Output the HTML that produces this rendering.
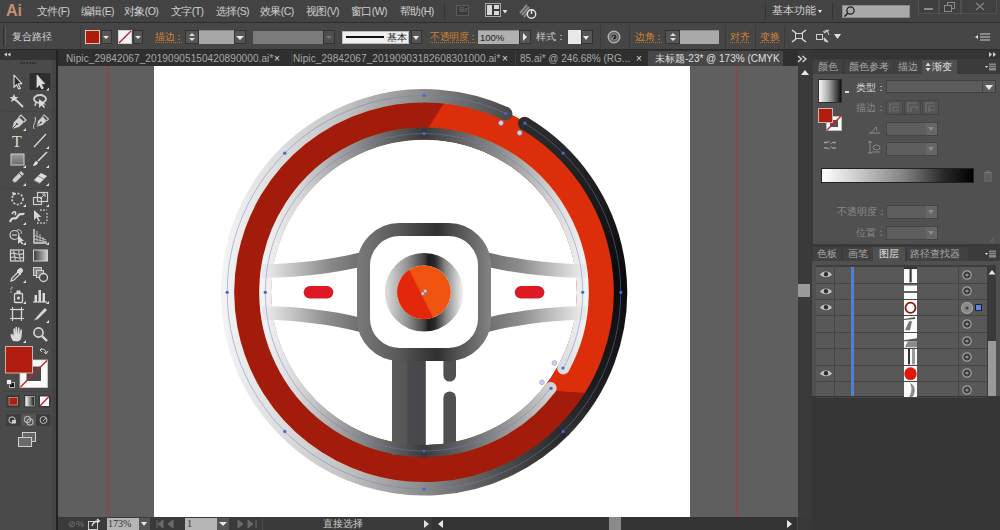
<!DOCTYPE html>
<html><head><meta charset="utf-8">
<style>
*{margin:0;padding:0;box-sizing:border-box}
html,body{width:1000px;height:530px;overflow:hidden;background:#363636;font-family:"Liberation Sans",sans-serif;}
.a{position:absolute}
.t{position:absolute;white-space:nowrap;line-height:1}
.mn{position:absolute;top:5px;font-size:10.5px;color:#cfcfcf;white-space:nowrap;line-height:12px;letter-spacing:-0.6px}
.cb{position:absolute;font-size:10px;white-space:nowrap;line-height:12px}
.or{color:#cf8232;text-decoration:underline;text-decoration-style:dotted;text-decoration-color:#b07030;text-underline-offset:2px;letter-spacing:-0.4px}
.dd{position:absolute;background:#5b5b5b;border:1px solid #333}
.tri{position:absolute;width:0;height:0;border-left:4px solid transparent;border-right:4px solid transparent;border-top:5px solid #e8e8e8}
.sp{position:absolute;background:#333;width:1px}
#menubar{left:0;top:0;width:1000px;height:22px;background:#434343}
#ctrlbar{left:0;top:23px;width:1000px;height:26px;background:#464646}
#sep1{left:0;top:22px;width:1000px;height:1px;background:#2c2c2c}
#sep2{left:0;top:49px;width:1000px;height:1px;background:#2a2a2a}
#toolbar{left:0;top:50px;width:56px;height:480px;background:#4a4a4a}
#tabbar{left:58px;top:50px;width:740px;height:16px;background:#2f2f2f}
#canvas{left:58px;top:66px;width:740px;height:451px;background:#5f5f5f;overflow:hidden}
#status{left:58px;top:517px;width:740px;height:13px;background:#3a3a3a}
#vscroll{left:798px;top:50px;width:14px;height:480px;background:#383838}
#panel{left:812px;top:50px;width:188px;height:346px;background:#535353}
.tab{position:absolute;top:53px;font-size:10px;color:#a9a9a9;white-space:nowrap;line-height:12px}
</style></head>
<body>
<!-- MENU BAR -->
<div class="a" id="menubar"></div>
<div class="t" style="left:6px;top:3px;font-size:16px;font-weight:bold;color:#c68e6c;letter-spacing:0px">Ai</div>
<div class="mn" style="left:37px">文件(F)</div>
<div class="mn" style="left:81px">编辑(E)</div>
<div class="mn" style="left:124px">对象(O)</div>
<div class="mn" style="left:171px">文字(T)</div>
<div class="mn" style="left:216px">选择(S)</div>
<div class="mn" style="left:260px">效果(C)</div>
<div class="mn" style="left:306px">视图(V)</div>
<div class="mn" style="left:351px">窗口(W)</div>
<div class="mn" style="left:400px">帮助(H)</div>
<div class="sp" style="left:444px;top:2px;height:18px;background:#353535"></div>
<div class="a" style="left:456px;top:5px;width:13px;height:11px;border:1px solid #5c5c5c;background:#3a3a3a"></div>
<div class="t" style="left:459px;top:6px;font-size:8px;color:#5e5e5e;font-weight:bold">Br</div>
<svg class="a" style="left:485px;top:3px" width="24" height="15" viewBox="0 0 24 15">
 <rect x="0.5" y="0.5" width="15" height="13" fill="#3a3a3a" stroke="#aaa"/>
 <rect x="2" y="2" width="5" height="10" fill="#d8d8d8"/><rect x="9" y="2" width="5" height="4" fill="#d8d8d8"/><rect x="9" y="8" width="5" height="4" fill="#d8d8d8"/>
 <path d="M17.5,7 L22.5,7 L20,10.5 Z" fill="#ddd"/>
</svg>
<svg class="a" style="left:519px;top:4px" width="20" height="16" viewBox="0 0 20 16">
 <path d="M1,9 L8,1 M3,11 L10,3 M5,13 L9,8" stroke="#8a8a8a" stroke-width="2"/>
 <circle cx="12.5" cy="10" r="4.2" fill="none" stroke="#e0e0e0" stroke-width="1.4"/>
 <path d="M12.5,5 L12.5,10" stroke="#e0e0e0" stroke-width="1.4"/>
</svg>
<div class="sp" style="left:765px;top:2px;height:18px;background:#353535"></div>
<div class="t" style="left:772px;top:5px;font-size:11px;color:#cfcfcf">基本功能</div>
<div class="tri" style="left:818px;top:10px;border-left-width:2.5px;border-right-width:2.5px;border-top-width:3px"></div>
<div class="sp" style="left:832px;top:2px;height:18px;background:#353535"></div>
<div class="a" style="left:842px;top:5px;width:68px;height:13px;background:#a9a9a9;border:1px solid #8a8a8a"></div>
<svg class="a" style="left:843px;top:5px" width="14" height="13" viewBox="0 0 14 13"><circle cx="7.5" cy="5.5" r="3.6" fill="none" stroke="#222" stroke-width="1.3"/><path d="M5,8 L1.5,11.5" stroke="#222" stroke-width="1.6"/></svg>
<div class="a" style="left:918px;top:-1px;width:21px;height:15px;border:1px solid #505050;background:#404040"></div>
<div class="a" style="left:924px;top:8px;width:9px;height:2px;background:#8a8a8a"></div>
<div class="a" style="left:939px;top:-1px;width:22px;height:15px;border:1px solid #505050;background:#404040"></div>
<svg class="a" style="left:944px;top:2px" width="12" height="10" viewBox="0 0 12 10"><rect x="3.5" y="0.5" width="7" height="6" fill="none" stroke="#8a8a8a"/><rect x="0.5" y="3.5" width="7" height="6" fill="#3e3e3e" stroke="#8a8a8a"/></svg>
<div class="a" style="left:961px;top:-1px;width:36px;height:15px;border:1px solid #505050;background:#404040"></div>
<svg class="a" style="left:975px;top:2px" width="10" height="9" viewBox="0 0 10 9"><path d="M1,1 L9,8 M9,1 L1,8" stroke="#858585" stroke-width="1.1"/></svg>

<div class="a" id="sep1"></div>
<!-- CONTROL BAR -->
<div class="a" id="ctrlbar"></div>
<div class="a" style="left:3px;top:27px;width:3px;height:19px;border-left:1px solid #2e2e2e;border-right:1px solid #555"></div>
<div class="cb" style="left:12px;top:31px;color:#d6d6d6;font-family:'Liberation Serif',serif">复合路径</div>
<div class="sp" style="left:80px;top:25px;height:23px;background:#3a3a3a"></div>
<!-- fill swatch -->
<div class="a" style="left:85px;top:30px;width:15px;height:14px;background:#b01c0c;border:1px solid #e0c0b0"></div>
<div class="dd" style="left:101px;top:30px;width:11px;height:14px;background:#555"></div>
<div class="tri" style="left:103px;top:36px;border-left-width:3px;border-right-width:3px;border-top-width:3px"></div>
<!-- stroke swatch -->
<div class="a" style="left:118px;top:30px;width:14px;height:14px;background:#f4f4f4;border:1px solid #ccc"></div>
<svg class="a" style="left:118px;top:30px" width="14" height="14"><path d="M1,13 L13,1" stroke="#c0182a" stroke-width="1.3"/></svg>
<div class="dd" style="left:133px;top:30px;width:10px;height:14px;background:#555"></div>
<div class="tri" style="left:135px;top:36px;border-left-width:3px;border-right-width:3px;border-top-width:3px"></div>
<div class="cb or" style="left:155px;top:31px">描边：</div>
<!-- stroke weight -->
<div class="dd" style="left:185px;top:30px;width:14px;height:14px;background:#555"></div>
<svg class="a" style="left:186px;top:31px" width="12" height="12"><path d="M3,5 L6,2 L9,5 Z M3,7 L6,10 L9,7 Z" fill="#ddd"/></svg>
<div class="a" style="left:199px;top:30px;width:35px;height:14px;background:#a6a6a6;border-top:1px solid #888"></div>
<div class="dd" style="left:234px;top:30px;width:12px;height:14px;background:#555"></div>
<div class="tri" style="left:236px;top:36px;border-left-width:4px;border-right-width:4px;border-top-width:4px"></div>
<div class="a" style="left:253px;top:31px;width:70px;height:13px;background:#7a7a7a"></div>
<div class="dd" style="left:323px;top:30px;width:12px;height:14px;background:#4e4e4e"></div>
<div class="tri" style="left:326px;top:36px;border-left-width:3px;border-right-width:3px;border-top-width:3px;border-top-color:#777"></div>
<!-- brush -->
<div class="a" style="left:342px;top:31px;width:67px;height:13px;background:#efefef;border:1px solid #bbb"></div>
<div class="a" style="left:346px;top:36px;width:38px;height:2px;background:#111"></div>
<div class="cb" style="left:387px;top:32px;color:#222;font-size:10px;font-family:'Liberation Serif',serif">基本</div>
<div class="dd" style="left:411px;top:30px;width:11px;height:14px;background:#555"></div>
<div class="tri" style="left:413px;top:36px;border-left-width:3.5px;border-right-width:3.5px;border-top-width:4px"></div>
<div class="cb or" style="left:430px;top:31px;font-family:'Liberation Serif',serif">不透明度：</div>
<div class="a" style="left:478px;top:30px;width:41px;height:14px;background:#b0b0b0;border-top:1px solid #888"></div>
<div class="cb" style="left:480px;top:32px;color:#222;font-size:9.5px">100%</div>
<div class="dd" style="left:519px;top:30px;width:12px;height:14px;background:#555"></div>
<svg class="a" style="left:522px;top:33px" width="6" height="8"><path d="M1,0 L5,4 L1,8 Z" fill="#e8e8e8"/></svg>
<div class="cb" style="left:536px;top:31px;color:#d0d0d0;font-family:'Liberation Serif',serif">样式：</div>
<div class="a" style="left:568px;top:30px;width:13px;height:14px;background:#e8e8e8"></div>
<div class="dd" style="left:581px;top:30px;width:12px;height:14px;background:#555"></div>
<div class="tri" style="left:583px;top:36px;border-left-width:3.5px;border-right-width:3.5px;border-top-width:4px"></div>
<div class="sp" style="left:600px;top:25px;height:23px;background:#3a3a3a"></div>
<svg class="a" style="left:607px;top:30px" width="14" height="14"><circle cx="7" cy="7" r="5.8" fill="#666" stroke="#b8b8b8" stroke-width="1.3"/><circle cx="7" cy="7" r="3" fill="#2e2e2e" stroke="#999" stroke-width="0.8"/><path d="M5,9 L7,6" stroke="#ccc" stroke-width="0.8"/></svg>
<div class="sp" style="left:629px;top:25px;height:23px;background:#3a3a3a"></div>
<div class="cb or" style="left:635px;top:31px;font-family:'Liberation Serif',serif">边角：</div>
<div class="dd" style="left:665px;top:30px;width:15px;height:14px;background:#555"></div>
<svg class="a" style="left:667px;top:31px" width="12" height="12"><path d="M3,5 L6,2 L9,5 Z M3,7 L6,10 L9,7 Z" fill="#ddd"/></svg>
<div class="a" style="left:680px;top:30px;width:39px;height:14px;background:#a9a9a9;border-top:1px solid #888"></div>
<div class="sp" style="left:725px;top:25px;height:23px;background:#3a3a3a"></div>
<div class="cb or" style="left:730px;top:31px;font-family:'Liberation Serif',serif">对齐</div>
<div class="sp" style="left:755px;top:25px;height:23px;background:#3a3a3a"></div>
<div class="cb or" style="left:760px;top:31px;font-family:'Liberation Serif',serif">变换</div>
<div class="sp" style="left:784px;top:25px;height:23px;background:#3a3a3a"></div>
<svg class="a" style="left:791px;top:29px" width="16" height="14" viewBox="0 0 16 14"><path d="M1,1 L5,4 M15,1 L11,4 M1,13 L5,10 M15,13 L11,10" stroke="#d8d8d8" stroke-width="1.5"/><rect x="4.5" y="4.5" width="7" height="5" fill="none" stroke="#d8d8d8"/></svg>
<svg class="a" style="left:815px;top:29px" width="16" height="14" viewBox="0 0 16 14"><rect x="1.5" y="5.5" width="6" height="5" fill="none" stroke="#ccc"/><path d="M9,4 L14,1 M9,9 L13,13 L10,12 Z" stroke="#ccc" stroke-width="1.3" fill="#ccc"/><path d="M8,3 L12,1 L14,6" stroke="#ccc" fill="none"/></svg>
<svg class="a" style="left:834px;top:34px" width="7" height="5"><path d="M0,0 L7,0 L3.5,5 Z" fill="#ddd"/></svg>
<svg class="a" style="left:975px;top:33px" width="15" height="8" viewBox="0 0 15 8"><path d="M0,4 L3,2 L3,6 Z" fill="#ddd"/><path d="M5,1 L15,1 M5,4 L15,4 M5,7 L15,7" stroke="#ccc" stroke-width="1.2"/></svg>

<div class="a" id="sep2"></div>
<div class="a" id="toolbar"></div><svg class="a" style="left:0;top:50px" width="58" height="480" viewBox="0 50 58 480">
<rect x="0" y="50" width="56" height="10" fill="#343434"/>
<path d="M4,54.5 L7,52.5 L7,56.5 Z M7.5,54.5 L10.5,52.5 L10.5,56.5 Z" fill="#cfcfcf"/>
<rect x="52" y="60" width="4" height="470" fill="#444"/><rect x="56" y="50" width="2.5" height="480" fill="#222"/>
<path d="M20,63 L36,63" stroke="#333" stroke-width="2" stroke-dasharray="2 1"/>
<path d="M3,111.5 L54,111.5 M3,188.5 L54,188.5 M3,391.5 L54,391.5 M3,411.5 L54,411.5" stroke="#444" stroke-width="1"/>
<g transform="translate(9,73.5)"><path d="M5,1.5 L5,14 L7.5,11.2 L9.8,15.5 L11.4,14.7 L9.2,10.4 L12.8,10.2 Z" fill="#2a2a2a" stroke="#e0e0e0" stroke-width="1.1" stroke-linejoin="round"/></g>
<rect x="29.5" y="73" width="21" height="17" fill="#2e2e2e"/>
<g transform="translate(32,73.5)"><path d="M5,1.5 L5,14 L7.5,11.2 L9.8,15.5 L11.4,14.7 L9.2,10.4 L12.8,10.2 Z" fill="#dcdcdc" stroke="#dcdcdc" stroke-width="0.8" stroke-linejoin="round"/><path d="M17,14 L17,17 L14,17 Z" fill="#e0e0e0"/></g>
<g transform="translate(9,93)"><path d="M7,7 L14,14" stroke="#d0d0d0" stroke-width="2"/><path d="M5,1 L6.3,4 L9.5,4 L7,6 L8,9 L5,7.2 L2,9 L3,6 L0.5,4 L3.7,4 Z" fill="#d8d8d8"/></g>
<g transform="translate(32,93)"><ellipse cx="8" cy="6" rx="6" ry="4" fill="none" stroke="#d0d0d0" stroke-width="1.8"/><path d="M7,6 L7,15 L9.5,12.5 L12,15 L13,14 L11,11.5 L14,11.5 Z" fill="#d8d8d8"/><path d="M4,9 L3,13" stroke="#d0d0d0" stroke-width="1.5"/></g>
<g transform="translate(9,114)"><path d="M3,15 L5,8 L10,3 L15,8 L10,13 Z" fill="#d0d0d0"/><path d="M3,15 L8,10" stroke="#4a4a4a" stroke-width="1"/><circle cx="8" cy="10" r="1.1" fill="#4a4a4a"/><path d="M10,3 L12,1 L17,6 L15,8" fill="none" stroke="#d0d0d0" stroke-width="1.2"/><path d="M17,14 L17,17 L14,17 Z" fill="#e0e0e0"/></g>
<g transform="translate(32,114)"><g transform="translate(2,0) scale(0.85)"><path d="M3,15 L5,8 L10,3 L15,8 L10,13 Z" fill="#d0d0d0"/><path d="M3,15 L8,10" stroke="#4a4a4a" stroke-width="1"/><circle cx="8" cy="10" r="1.1" fill="#4a4a4a"/><path d="M10,3 L12,1 L17,6 L15,8" fill="none" stroke="#d0d0d0" stroke-width="1.2"/></g><path d="M2,15 C0,10 5,9 3,3" fill="none" stroke="#d0d0d0" stroke-width="1"/></g>
<g transform="translate(9,132)"><text x="8" y="14.5" font-family="Liberation Serif" font-size="16" fill="#dadada" text-anchor="middle">T</text></g>
<g transform="translate(32,132)"><path d="M2,15 L14,2" stroke="#d8d8d8" stroke-width="1.3"/><path d="M17,14 L17,17 L14,17 Z" fill="#e0e0e0"/></g>
<g transform="translate(9,151)"><defs><linearGradient id="tg1" x1="0" y1="0" x2="0" y2="1"><stop offset="0" stop-color="#9a9a9a"/><stop offset="1" stop-color="#6a6a6a"/></linearGradient></defs><rect x="2" y="3" width="13" height="11" fill="url(#tg1)" stroke="#cfcfcf" stroke-width="1"/><path d="M17,14 L17,17 L14,17 Z" fill="#e0e0e0"/></g>
<g transform="translate(32,151)"><path d="M6,10 L15,1" stroke="#d8d8d8" stroke-width="1.6"/><path d="M1,15 C3,15 5,14 6,12 L5,10 C3,10 2,12 1,15 Z" fill="#e0e0e0"/><path d="M17,14 L17,17 L14,17 Z" fill="#e0e0e0"/></g>
<g transform="translate(9,169)"><path d="M3,14 L4,10 L12,2 L15,5 L7,13 Z" fill="#cfcfcf"/><path d="M3,14 L4.5,12.5" stroke="#333" stroke-width="1.2"/><path d="M10,4 L13,7" stroke="#555"/><path d="M17,14 L17,17 L14,17 Z" fill="#e0e0e0"/></g>
<g transform="translate(32,169)"><path d="M2,11 L9,4 L15,7 L8,14 Z" fill="#e0e0e0"/><path d="M2,11 L8,14 L8,15 L2,12 Z" fill="#999"/><path d="M6,7 L12,10" stroke="#888"/><path d="M17,14 L17,17 L14,17 Z" fill="#e0e0e0"/></g>
<g transform="translate(9,190)"><circle cx="8.5" cy="9" r="5.5" fill="none" stroke="#d0d0d0" stroke-width="1.6" stroke-dasharray="2 1.6"/><path d="M3,2 L7,3 L4,6 Z" fill="#d8d8d8"/><path d="M17,14 L17,17 L14,17 Z" fill="#e0e0e0"/></g>
<g transform="translate(32,190)"><rect x="1.5" y="7.5" width="8" height="7" fill="none" stroke="#d0d0d0" stroke-width="1.2"/><rect x="5.5" y="2.5" width="10" height="9" fill="none" stroke="#d0d0d0" stroke-width="1.2"/><path d="M8,9 L13,4 M10,4 L13,4 L13,7" stroke="#d0d0d0" fill="none"/><path d="M17,14 L17,17 L14,17 Z" fill="#e0e0e0"/></g>
<g transform="translate(9,208)"><path d="M1,14 C4,6 6,14 9,8 C11,4 14,8 15,5" fill="none" stroke="#d8d8d8" stroke-width="2.2"/><path d="M3,6 C5,2 8,4 6,7" fill="none" stroke="#d8d8d8" stroke-width="1.6"/><path d="M17,14 L17,17 L14,17 Z" fill="#e0e0e0"/></g>
<g transform="translate(32,208)"><path d="M2,2 L2,12 L4.5,9.5 L6.5,13.5 L8,12.8 L6,9 L9.5,9 Z" fill="#d8d8d8"/><path d="M8,2 L15,2 M15,5 L15,14 M5,15 L15,15" stroke="#d0d0d0" stroke-width="1.4" stroke-dasharray="1.6 1.6"/></g>
<g transform="translate(9,228)"><circle cx="5.5" cy="7" r="4.5" fill="none" stroke="#cfcfcf" stroke-width="1.2"/><path d="M3,7 L8,7" stroke="#cfcfcf" stroke-width="1.2"/><path d="M8,2 C12,1 13,4 12,6" fill="none" stroke="#cfcfcf"/><path d="M9,7 L9,16 L11,14 L13,16.5 L14.3,15.5 L12.3,13 L15,13 Z" fill="#d8d8d8"/><path d="M17,14 L17,17 L14,17 Z" fill="#e0e0e0"/></g>
<g transform="translate(32,228)"><path d="M2,1 L2,15 L15,15" stroke="#d8d8d8" stroke-width="1.4" fill="none"/><path d="M5,3 L5,15 M8,6 L8,15 M11,9 L11,15 M2,7 L14,12 M2,11 L15,14" stroke="#bbb" stroke-width="1"/><path d="M17,14 L17,17 L14,17 Z" fill="#e0e0e0"/></g>
<g transform="translate(9,247.5)"><rect x="1.5" y="2.5" width="13" height="11" fill="none" stroke="#d8d8d8" stroke-width="1.2"/><path d="M2,6 C6,4 9,9 14,6 M2,10 C6,8 9,12 14,10 M5,3 C4,7 7,9 6,13 M10,3 C9,7 12,9 11,13" stroke="#cfcfcf" fill="none" stroke-width="1.1"/></g>
<g transform="translate(32,247.5)"><defs><linearGradient id="tg2" x1="0" y1="0" x2="1" y2="0"><stop offset="0" stop-color="#3a3a3a"/><stop offset="1" stop-color="#cfcfcf"/></linearGradient></defs><rect x="1.5" y="2.5" width="14" height="11" fill="url(#tg2)" stroke="#d0d0d0" stroke-width="1"/></g>
<g transform="translate(9,266)"><path d="M2,15 L3,12 L9,6 L11,8 L5,14 Z" fill="none" stroke="#d8d8d8" stroke-width="1.3"/><path d="M8,5 L12,9 M10,3 C12,1 15,4 13,6 L11,8 L8,5 Z" fill="#d8d8d8" stroke="#d8d8d8"/><path d="M17,14 L17,17 L14,17 Z" fill="#e0e0e0"/></g>
<g transform="translate(32,266)"><rect x="1.5" y="1.5" width="8" height="8" fill="#888" stroke="#cfcfcf"/><rect x="4.5" y="4.5" width="7" height="7" fill="#777" stroke="#cfcfcf"/><circle cx="11.5" cy="11.5" r="4" fill="#4a4a4a" stroke="#d8d8d8" stroke-width="1.3"/></g>
<g transform="translate(9,287)"><rect x="5.5" y="6.5" width="8" height="9" rx="1" fill="none" stroke="#d8d8d8" stroke-width="1.3"/><rect x="7.5" y="3.5" width="4" height="3" fill="#d8d8d8"/><circle cx="9.5" cy="11" r="1.6" fill="#d8d8d8"/><path d="M1,2 L3,2 M1,5 L3,5 M2,0 L4,1" stroke="#aaa"/><path d="M17,14 L17,17 L14,17 Z" fill="#e0e0e0"/></g>
<g transform="translate(32,287)"><path d="M1,15 L15,15" stroke="#d8d8d8" stroke-width="1.2"/><rect x="2.5" y="8" width="2.5" height="7" fill="#d8d8d8"/><rect x="6.5" y="3" width="2.5" height="12" fill="#d8d8d8"/><rect x="10.5" y="6" width="2.5" height="9" fill="#d8d8d8"/><path d="M17,14 L17,17 L14,17 Z" fill="#e0e0e0"/></g>
<g transform="translate(9,306)"><rect x="3.5" y="3.5" width="9" height="9" fill="none" stroke="#d8d8d8" stroke-width="1.3"/><path d="M1,3.5 L15,3.5 M1,12.5 L15,12.5 M3.5,1 L3.5,15 M12.5,1 L12.5,15" stroke="#d8d8d8" stroke-width="1"/></g>
<g transform="translate(32,306)"><path d="M2,14 L10,5 L13,2 L15,4 L6,13 Z" fill="#d8d8d8"/><path d="M2,14 L6,13" stroke="#999"/><path d="M17,14 L17,17 L14,17 Z" fill="#e0e0e0"/></g>
<g transform="translate(9,326)"><path d="M4,15 C2,12 1,9 2,8 C3,7 4,9 4.5,10 L4.5,3 C4.5,2 6,2 6,3 L6,8 L6.5,1.5 C6.5,0.5 8,0.5 8,1.5 L8.3,8 L9,2 C9,1 10.5,1 10.5,2 L10.5,8.5 L11.5,4 C11.8,3 13,3.2 13,4.2 L12.5,11 C12,14 10,15.5 8,15.5 Z" fill="#dadada"/><path d="M17,14 L17,17 L14,17 Z" fill="#e0e0e0"/></g>
<g transform="translate(32,326)"><circle cx="6.5" cy="6.5" r="4.6" fill="#555" stroke="#d8d8d8" stroke-width="1.6"/><path d="M10,10 L15,15" stroke="#d8d8d8" stroke-width="2.4"/></g>
<rect x="20" y="360" width="27.5" height="27.5" fill="#fafafa" stroke="#cfcfcf" stroke-width="0.8"/>
<rect x="26.5" y="366.5" width="14.5" height="14.5" fill="#4a4a4a"/>
<path d="M20.5,387 L47,360.5" stroke="#c0202a" stroke-width="1.5"/>
<rect x="5.5" y="346.5" width="27" height="26.5" fill="#b01d0e" stroke="#d8b0a0" stroke-width="1"/>
<path d="M40,350 C43,348 46,350 46,353 M44,352 L46,354 L48,351 M40,350 L42,348 M40,350 L42,352" stroke="#d0d0d0" fill="none" stroke-width="1"/>
<rect x="9.5" y="382.5" width="5" height="5" fill="#111" stroke="#ddd" stroke-width="0.8"/><rect x="6.5" y="379.5" width="5" height="5" fill="#f0f0f0" stroke="#333" stroke-width="0.6"/>
<rect x="6.5" y="395" width="13.5" height="12.5" fill="#3a3a3a"/><rect x="9" y="397.5" width="8.5" height="7.5" fill="#b01d0e" stroke="#d0c0b0" stroke-width="0.6"/>
<defs><linearGradient id="tg3" x1="0" y1="0" x2="1" y2="0"><stop offset="0" stop-color="#fff"/><stop offset="1" stop-color="#111"/></linearGradient></defs>
<rect x="24" y="395" width="12" height="12.5" fill="#3a3a3a"/><rect x="25.5" y="396.5" width="9" height="9.5" fill="url(#tg3)" stroke="#ccc" stroke-width="0.6"/>
<rect x="38.5" y="395" width="12" height="12.5" fill="#3a3a3a"/><rect x="40" y="396.5" width="9" height="9.5" fill="#fff"/><path d="M40,406 L49,396.5" stroke="#c0202a" stroke-width="1.4"/>
<rect x="6.5" y="414" width="44" height="12" fill="#3c3c3c"/><rect x="21" y="414" width="15" height="12" fill="#555"/>
<circle cx="12" cy="420" r="3.2" fill="none" stroke="#ccc"/><rect x="12" y="420" width="4" height="3.5" fill="#ccc"/>
<circle cx="27.5" cy="419.5" r="3.2" fill="none" stroke="#ccc"/><circle cx="30" cy="422" r="3.2" fill="none" stroke="#ccc"/>
<circle cx="43.5" cy="420" r="3.5" fill="none" stroke="#bbb"/><path d="M43,421 L46,418" stroke="#bbb"/>
<rect x="22.5" y="432.5" width="13" height="9" fill="#666" stroke="#cfcfcf"/><rect x="18.5" y="437.5" width="13" height="9" fill="#6a6a6a" stroke="#cfcfcf"/>
</svg>
<div class="a" id="tabbar"></div>
<div class="tab" style="left:66px;letter-spacing:0.1px">Nipic_29842067_20190905150420890000.ai*</div>
<div class="tab" style="left:274px;color:#ddd">×</div>
<div class="sp" style="left:291px;top:51px;height:15px;background:#404040"></div>
<div class="tab" style="left:293px;letter-spacing:0.1px">Nipic_29842067_20190903182608301000.ai*</div>
<div class="tab" style="left:502px;color:#ddd">×</div>
<div class="sp" style="left:515px;top:51px;height:15px;background:#404040"></div>
<div class="tab" style="left:520px">85.ai* @ 246.68% (RG...</div>
<div class="tab" style="left:636px;color:#ddd">×</div>
<div class="a" style="left:648px;top:51px;width:135px;height:15px;background:#474747"></div>
<div class="tab" style="left:655px;color:#e0e0e0">未标题-23* @ 173% (CMYK</div>
<div class="a" id="canvas">
  <div class="a" style="left:96px;top:0;width:536px;height:451px;background:#fff"></div>
  <div class="a" style="left:47px;top:0;width:6px;height:451px;background:linear-gradient(90deg,#5f5f5f,#705656 30%,#7a5050 50%,#705656 70%,#5f5f5f)"></div>
  <div class="a" style="left:676px;top:0;width:6px;height:451px;background:linear-gradient(90deg,#5f5f5f,#705656 30%,#7c4e4e 50%,#705656 70%,#5f5f5f)"></div>
</div>
<svg class="a" style="left:0;top:0" width="1000" height="530" viewBox="0 0 1000 530">
<defs>
<linearGradient id="gOuter" gradientUnits="userSpaceOnUse" x1="222" y1="0" x2="626" y2="0">
 <stop offset="0" stop-color="#f4f4f4"/><stop offset="0.3" stop-color="#c4c4c4"/><stop offset="0.5" stop-color="#8a8a8a"/><stop offset="0.7" stop-color="#4c4c4c"/><stop offset="0.85" stop-color="#262626"/><stop offset="1" stop-color="#0a0a0a"/>
</linearGradient>
<linearGradient id="gOuterB" gradientUnits="userSpaceOnUse" x1="0" y1="115" x2="0" y2="438">
 <stop offset="0" stop-color="#2e2e2e"/><stop offset="0.5" stop-color="#0a0a0a"/><stop offset="0.85" stop-color="#1e1e1e"/><stop offset="1" stop-color="#333"/>
</linearGradient>
<linearGradient id="gInner" gradientUnits="userSpaceOnUse" x1="259" y1="0" x2="589" y2="0">
 <stop offset="0" stop-color="#f6f6f6"/><stop offset="0.12" stop-color="#d8d8d8"/><stop offset="0.25" stop-color="#a0a0a0"/><stop offset="0.5" stop-color="#3a3a3a"/><stop offset="0.75" stop-color="#959595"/><stop offset="0.9" stop-color="#d8d8d8"/><stop offset="1" stop-color="#f6f6f6"/>
</linearGradient>
<linearGradient id="gHub" gradientUnits="userSpaceOnUse" x1="357" y1="0" x2="491" y2="0">
 <stop offset="0" stop-color="#7a7a7a"/><stop offset="0.3" stop-color="#5a5a5a"/><stop offset="0.5" stop-color="#3c3c3c"/><stop offset="0.6" stop-color="#303030"/><stop offset="0.72" stop-color="#4c4c4c"/><stop offset="1" stop-color="#838383"/>
</linearGradient>
<linearGradient id="gSpL" gradientUnits="userSpaceOnUse" x1="268" y1="0" x2="360" y2="0">
 <stop offset="0" stop-color="#e8e8e8"/><stop offset="0.35" stop-color="#b8b8b8"/><stop offset="0.65" stop-color="#8c8c8c"/><stop offset="1" stop-color="#6e6e6e"/>
</linearGradient>
<linearGradient id="gSpR" gradientUnits="userSpaceOnUse" x1="580" y1="0" x2="488" y2="0">
 <stop offset="0" stop-color="#e8e8e8"/><stop offset="0.35" stop-color="#b8b8b8"/><stop offset="0.65" stop-color="#8c8c8c"/><stop offset="1" stop-color="#6e6e6e"/>
</linearGradient>
<linearGradient id="gDisc" gradientUnits="userSpaceOnUse" x1="385" y1="0" x2="463" y2="0">
 <stop offset="0" stop-color="#e0e0e0"/><stop offset="0.3" stop-color="#8e8e8e"/><stop offset="0.5" stop-color="#444"/><stop offset="0.56" stop-color="#1c1c1c"/><stop offset="0.64" stop-color="#2a2a2a"/><stop offset="0.78" stop-color="#8a8a8a"/><stop offset="1" stop-color="#f2f2f2"/>
</linearGradient>
<linearGradient id="gCol" gradientUnits="userSpaceOnUse" x1="392" y1="0" x2="426" y2="0">
 <stop offset="0" stop-color="#5c5c5c"/><stop offset="0.45" stop-color="#555"/><stop offset="0.46" stop-color="#47494c"/><stop offset="1" stop-color="#45474a"/>
</linearGradient>
<clipPath id="cpAnn"><path clip-rule="evenodd" d="M424.00,292.30 m-198,0 a198,198 0 1 0 396,0 a198,198 0 1 0 -396,0 Z M424.00,292.30 m-153,0 a153,153 0 1 0 306,0 a153,153 0 1 0 -306,0 Z"/></clipPath>
<clipPath id="cpDisc"><circle cx="424" cy="292.3" r="26.8"/></clipPath>
</defs>
<g clip-path="url(#cpAnn)"><rect x="200" y="80" width="450" height="430" fill="#a31b0a"/>
<path d="M462,75 L700,75 L700,394.5 L586,393 L530,389 L416,147 Z" fill="#dc2e0a"/></g>
<rect x="392" y="350" width="33.8" height="105" fill="url(#gCol)"/>
<path d="M443.4,350 L456,350 L456,375.2 A6.3,6.3 0 0 1 443.4,375.2 Z" fill="#505050"/>
<path d="M443.4,397.7 A6.3,6.3 0 0 1 456,397.7 L456,452 L443.4,452 Z" fill="#505050"/>
<path d="M550.58,388.03 A158.7,158.7 0 1 1 563.34,368.27" fill="none" stroke="url(#gInner)" stroke-width="12.2" stroke-linecap="round"/>
<path d="M565.35,428.80 A196.5,196.5 0 1 1 505.80,113.64" fill="none" stroke="url(#gOuter)" stroke-width="13.4"/>
<circle cx="505.80" cy="113.64" r="6.7" fill="url(#gOuter)"/>
<path d="M524.62,123.51 A196.5,196.5 0 0 1 562.95,431.25" fill="none" stroke="url(#gOuterB)" stroke-width="13.4"/>
<circle cx="524.62" cy="123.51" r="6.7" fill="url(#gOuterB)"/>
<path d="M262,264.5 Q318,263 360,252.5 L360,267 Q318,277 262,278 Z" fill="url(#gSpL)"/>
<path d="M262,306 Q318,307 360,317.5 L360,332 Q318,321 262,319.5 Z" fill="url(#gSpL)"/>
<path d="M586,264.5 Q530,263 488,252.5 L488,267 Q530,277 586,278 Z" fill="url(#gSpR)"/>
<path d="M586,306 Q530,307 488,317.5 L488,332 Q530,321 586,319.5 Z" fill="url(#gSpR)"/>
<rect x="363.5" y="229.5" width="121" height="125" rx="36" ry="36" fill="none" stroke="url(#gHub)" stroke-width="13"/>
<circle cx="424" cy="292.3" r="33" fill="none" stroke="url(#gDisc)" stroke-width="12.4"/>
<g clip-path="url(#cpDisc)"><rect x="390" y="260" width="70" height="70" fill="#f0530f"/><path d="M409.4,270.2 L433.5,318.3 L440,340 L380,340 L380,250 L400,250 Z" fill="#e3270b"/></g>
<rect x="303.7" y="286.1" width="29.6" height="12.4" rx="6.2" fill="#de1825"/>
<rect x="514.8" y="286.1" width="29.6" height="12.4" rx="6.2" fill="#de1825"/>
<path d="M524.77,123.26 A196.8,196.8 0 1 1 505.92,113.36" fill="none" stroke="#6580cc" stroke-width="0.6" opacity="0.8"/>
<path d="M550.58,388.03 A158.7,158.7 0 1 1 563.34,368.27" fill="none" stroke="#6580cc" stroke-width="0.6" opacity="0.8"/>
<circle cx="620.80" cy="292.30" r="1.6" fill="#4d62d6"/>
<circle cx="563.16" cy="431.46" r="1.6" fill="#4d62d6"/>
<circle cx="424.00" cy="489.10" r="1.6" fill="#4d62d6"/>
<circle cx="284.84" cy="431.46" r="1.6" fill="#4d62d6"/>
<circle cx="227.20" cy="292.30" r="1.6" fill="#4d62d6"/>
<circle cx="284.84" cy="153.14" r="1.6" fill="#4d62d6"/>
<circle cx="424.00" cy="95.50" r="1.6" fill="#4d62d6"/>
<circle cx="563.16" cy="153.14" r="1.6" fill="#4d62d6"/>
<circle cx="582.70" cy="292.30" r="1.6" fill="#4d62d6"/>
<circle cx="424.00" cy="451.00" r="1.6" fill="#4d62d6"/>
<circle cx="265.30" cy="292.30" r="1.6" fill="#4d62d6"/>
<circle cx="424.00" cy="133.60" r="1.6" fill="#4d62d6"/>
<circle cx="505.80" cy="113.50" r="1.6" fill="#4d62d6"/>
<circle cx="524.90" cy="123.10" r="1.6" fill="#4d62d6"/>
<circle cx="563.00" cy="368.00" r="1.6" fill="#4d62d6"/>
<circle cx="551.00" cy="388.30" r="1.6" fill="#4d62d6"/>
<circle cx="501.00" cy="123.00" r="2.4" fill="#c8d0ee" stroke="#8a9ad8" stroke-width="0.6"/>
<circle cx="519.60" cy="132.90" r="2.4" fill="#c8d0ee" stroke="#8a9ad8" stroke-width="0.6"/>
<circle cx="554.40" cy="363.00" r="2.4" fill="#c8d0ee" stroke="#8a9ad8" stroke-width="0.6"/>
<circle cx="542.00" cy="382.30" r="2.4" fill="#c8d0ee" stroke="#8a9ad8" stroke-width="0.6"/>
<circle cx="422.8" cy="293.6" r="1.6" fill="#d0d6f0" stroke="#7a8ad0" stroke-width="0.5"/><circle cx="425.3" cy="291" r="1.6" fill="#d0d6f0" stroke="#7a8ad0" stroke-width="0.5"/>
</svg>
<div class="a" id="status"></div>
<div class="a" style="left:68px;top:519px;width:22px;height:10px;color:#777;font-size:9px;line-height:10px">⊘%</div>
<svg class="a" style="left:87px;top:518px" width="14" height="12" viewBox="0 0 14 12"><rect x="1.5" y="3.5" width="9" height="8" fill="none" stroke="#ccc"/><path d="M5,8 C6,4 8,3 12,3 M10,1 L12.5,3 L10,5" fill="none" stroke="#ddd" stroke-width="1.3"/></svg>
<div class="a" style="left:107px;top:518px;width:32px;height:12px;background:#b6b6b6"></div>
<div class="t" style="left:108px;top:519px;font-size:10px;color:#333;font-family:'Liberation Serif',serif">173%</div>
<div class="a" style="left:139px;top:518px;width:11px;height:12px;background:#555"></div>
<div class="tri" style="left:141px;top:522px;border-left-width:3.5px;border-right-width:3.5px;border-top-width:4px"></div>
<svg class="a" style="left:155px;top:519px" width="24" height="10"><path d="M2,1 L2,9 M8,1 L3,5 L8,9 Z M18,1 L13,5 L18,9 Z" stroke="#6a6a6a" fill="#6a6a6a"/></svg>
<div class="a" style="left:185px;top:518px;width:32px;height:12px;background:#b6b6b6"></div>
<div class="t" style="left:187px;top:519px;font-size:10px;color:#333;font-family:'Liberation Serif',serif">1</div>
<div class="a" style="left:217px;top:518px;width:12px;height:12px;background:#555"></div>
<div class="tri" style="left:219px;top:522px;border-left-width:4px;border-right-width:4px;border-top-width:4px"></div>
<svg class="a" style="left:235px;top:519px" width="26" height="10"><path d="M3,1 L8,5 L3,9 Z M13,1 L18,5 L13,9 Z M21,1 L21,9" stroke="#6a6a6a" fill="#6a6a6a"/></svg>
<div class="sp" style="left:262px;top:518px;height:12px;background:#4a4a4a"></div>
<div class="t" style="left:323px;top:519px;font-size:10px;color:#cfcfcf;font-family:'Liberation Serif',serif">直接选择</div>
<svg class="a" style="left:423px;top:519px" width="8" height="10"><path d="M1,1 L6,5 L1,9 Z" fill="#e0e0e0"/></svg>
<div class="a" style="left:432px;top:517px;width:366px;height:13px;background:#333"></div>
<svg class="a" style="left:436px;top:519px" width="8" height="10"><path d="M7,1 L2,5 L7,9 Z" fill="#e8e8e8"/></svg>
<div class="a" style="left:609px;top:517px;width:12px;height:13px;background:#8a8a8a"></div>
<svg class="a" style="left:786px;top:519px" width="8" height="10"><path d="M1,1 L6,5 L1,9 Z" fill="#e8e8e8"/></svg>
<div class="a" style="left:797px;top:517px;width:3px;height:13px;background:#444"></div>

<div class="a" id="vscroll"></div>
<div class="a" id="panel"></div>
<div class="a" style="left:812px;top:50px;width:188px;height:9px;background:#353535"></div>
<svg class="a" style="left:988px;top:51px" width="10" height="7"><path d="M1,1 L4,3.5 L1,6 Z M5,1 L8,3.5 L5,6 Z" fill="#cfcfcf"/></svg>
<svg class="a" style="left:796.5px;top:54.5px" width="11" height="8"><path d="M1,1 L4.5,4 L1,7 M5.5,1 L9,4 L5.5,7" stroke="#dadada" stroke-width="1.3" fill="none"/></svg>
<div class="a" style="left:798px;top:66px;width:13px;height:451px;background:#3a3a3a"></div>
<svg class="a" style="left:800px;top:68px" width="10" height="8"><path d="M1,7 L5,2 L9,7 Z" fill="#e8e8e8"/></svg>
<div class="a" style="left:798px;top:284px;width:12px;height:13px;background:#9a9a9a"></div>
<div class="a" style="left:812px;top:59px;width:188px;height:15px;background:#3b3b3b"></div>
<div class="a" style="left:813px;top:60px;width:29px;height:14px;background:#414141"></div>
<div class="a" style="left:845px;top:60px;width:48px;height:14px;background:#414141"></div>
<div class="a" style="left:895px;top:60px;width:27px;height:14px;background:#414141"></div>
<div class="a" style="left:922px;top:60px;width:35px;height:14px;background:#505050"></div>
<div class="t" style="left:818px;top:62px;font-size:10px;color:#a8a8a8">颜色</div>
<div class="t" style="left:849px;top:62px;font-size:10px;color:#a8a8a8">颜色参考</div>
<div class="t" style="left:898px;top:62px;font-size:10px;color:#a8a8a8">描边</div>
<svg class="a" style="left:925px;top:62px" width="6" height="10"><path d="M3,0.5 L5.5,4 L0.5,4 Z M3,9.5 L5.5,6 L0.5,6 Z" fill="#ddd"/></svg>
<div class="t" style="left:932px;top:62px;font-size:10px;color:#e6e6e6">渐变</div>
<svg class="a" style="left:985px;top:63px" width="12" height="8"><path d="M0,3 L3,3 L1.5,5 Z" fill="#ddd"/><rect x="4" y="0.5" width="7" height="7" fill="#888"/><path d="M4,2.5 L11,2.5 M4,4.5 L11,4.5" stroke="#555"/></svg>
<div class="a" style="left:812px;top:74px;width:188px;height:170px;background:#505050"></div>
<div class="a" style="left:812px;top:74px;width:1px;height:322px;background:#3a3a3a"></div>
<div class="a" style="left:818px;top:79px;width:24px;height:24px;border:1px solid #2e2e2e;background:linear-gradient(90deg,#f8f8f8 0%,#b0b0b0 40%,#111 100%)"></div>
<div class="a" style="left:845px;top:91px;width:4px;height:1.5px;background:#ddd"></div>
<div class="a" style="left:826px;top:115.5px;width:15.5px;height:15.5px;background:#fafafa;border:0.8px solid #bbb"></div>
<div class="a" style="left:830px;top:119.5px;width:7.5px;height:7.5px;background:#555"></div>
<svg class="a" style="left:826px;top:115px" width="16" height="16"><path d="M0.5,15.5 L15.5,0.5" stroke="#c8202a" stroke-width="1.4"/></svg>
<div class="a" style="left:818px;top:108px;width:15px;height:14.5px;background:#b01d0e;border:1px solid #d8b0a0"></div>
<svg class="a" style="left:823px;top:140px" width="14" height="11"><path d="M1,2.5 L5,2.5 M9,2.5 L13,2.5 M1,8 L5,8 M9,8 L13,8" stroke="#9a9a9a" stroke-width="1.5"/><path d="M5,1 L9,4 M9,6.5 L5,9.5" stroke="#8a8a8a"/></svg>
<div class="t" style="left:856px;top:83px;font-size:10px;color:#d6d6d6;font-family:'Liberation Serif',serif">类型：</div>
<div class="a" style="left:886px;top:80px;width:110px;height:13px;background:#5c5c5c;border:1px solid #404040"></div>
<div class="a" style="left:982px;top:81px;width:1px;height:11px;background:#454545"></div>
<div class="tri" style="left:985px;top:85px;border-left-width:4px;border-right-width:4px;border-top-width:5px"></div>
<div class="t" style="left:856px;top:103px;font-size:10px;color:#8a8a8a;font-family:'Liberation Serif',serif">描边：</div>
<div class="a" style="left:886px;top:99.5px;width:17px;height:15px;background:#545454;border:1px solid #444"></div>
<div class="a" style="left:904px;top:99.5px;width:17px;height:15px;background:#545454;border:1px solid #444"></div>
<div class="a" style="left:922px;top:99.5px;width:17px;height:15px;background:#545454;border:1px solid #444"></div>
<svg class="a" style="left:886px;top:99.5px" width="54" height="15" viewBox="0 0 54 15"><path d="M4,12 L4,4 L13,4 M7,12 L7,7 L13,7 M10,12 L10,10 L13,10" stroke="#707070" fill="none" stroke-width="1.2"/><path d="M22,12 L22,3 L31,3 M25,12 L25,7 L31,7 L31,10" stroke="#707070" fill="none" stroke-width="1.2"/><path d="M40,12 L40,3 L49,3 M43,12 L43,6 L49,6 M43,10 L49,10" stroke="#707070" fill="none" stroke-width="1.2"/></svg>
<svg class="a" style="left:868px;top:125px" width="13" height="9"><path d="M1,8 L12,8 M3,8 L8,2 L9,6" stroke="#8a8a8a" fill="none" stroke-width="1"/></svg>
<svg class="a" style="left:868px;top:141px" width="13" height="13"><path d="M2,1 L2,12 M0,2 L2,0 L4,2 M0,11 L2,13 L4,11" stroke="#8a8a8a" fill="none"/><ellipse cx="8.5" cy="6.5" rx="3.5" ry="2.5" fill="none" stroke="#8a8a8a"/><path d="M4,11 L12,11" stroke="#8a8a8a"/></svg>
<div class="a" style="left:886px;top:121.5px;width:52px;height:14px;background:#5e5e5e;border:1px solid #444"></div>
<div class="a" style="left:926px;top:122.5px;width:11px;height:12px;background:#666"></div>
<div class="tri" style="left:928px;top:126.5px;border-left-width:3.5px;border-right-width:3.5px;border-top-width:4px;border-top-color:#8a8a8a"></div>
<div class="a" style="left:886px;top:141.5px;width:52px;height:14px;background:#5e5e5e;border:1px solid #444"></div>
<div class="a" style="left:926px;top:142.5px;width:11px;height:12px;background:#666"></div>
<div class="tri" style="left:928px;top:146.5px;border-left-width:3.5px;border-right-width:3.5px;border-top-width:4px;border-top-color:#8a8a8a"></div>
<div class="a" style="left:886px;top:205px;width:52px;height:14px;background:#5e5e5e;border:1px solid #444"></div>
<div class="a" style="left:926px;top:206px;width:11px;height:12px;background:#666"></div>
<div class="tri" style="left:928px;top:210px;border-left-width:3.5px;border-right-width:3.5px;border-top-width:4px;border-top-color:#8a8a8a"></div>
<div class="a" style="left:886px;top:225.5px;width:52px;height:14px;background:#5e5e5e;border:1px solid #444"></div>
<div class="a" style="left:926px;top:226.5px;width:11px;height:12px;background:#666"></div>
<div class="tri" style="left:928px;top:230.5px;border-left-width:3.5px;border-right-width:3.5px;border-top-width:4px;border-top-color:#8a8a8a"></div>
<div class="a" style="left:821px;top:167.5px;width:152.5px;height:15.5px;background:linear-gradient(90deg,#fff 0%,#c8c8c8 25%,#808080 55%,#2a2a2a 80%,#000 100%);border:1px solid #222"></div>
<svg class="a" style="left:983px;top:170px" width="10" height="12"><path d="M1,2.5 L9,2.5 M3.5,1 L6.5,1" stroke="#777"/><rect x="2" y="4" width="6" height="7" fill="none" stroke="#777"/><path d="M4,5 L4,10 M6,5 L6,10" stroke="#6a6a6a"/></svg>
<div class="t" style="left:837px;top:207px;font-size:10px;color:#8a8a8a;font-family:'Liberation Serif',serif">不透明度：</div>
<div class="t" style="left:856px;top:228px;font-size:10px;color:#8a8a8a;font-family:'Liberation Serif',serif">位置：</div>
<svg class="a" style="left:988px;top:236px" width="8" height="8"><path d="M7,1 L1,7 M7,4 L4,7" stroke="#666"/></svg>
<div class="a" style="left:812px;top:244px;width:188px;height:2px;background:#383838"></div>
<div class="a" style="left:812px;top:246px;width:188px;height:14.5px;background:#3b3b3b"></div>
<div class="a" style="left:813px;top:247px;width:28px;height:13.5px;background:#414141"></div>
<div class="a" style="left:843px;top:247px;width:30px;height:13.5px;background:#414141"></div>
<div class="a" style="left:873px;top:247px;width:32px;height:13.5px;background:#505050"></div>
<div class="a" style="left:907px;top:247px;width:61px;height:13.5px;background:#414141"></div>
<div class="t" style="left:817px;top:249px;font-size:10px;color:#a8a8a8">色板</div>
<div class="t" style="left:848px;top:249px;font-size:10px;color:#a8a8a8">画笔</div>
<div class="t" style="left:879px;top:249px;font-size:10px;color:#e6e6e6">图层</div>
<div class="t" style="left:910px;top:249px;font-size:10px;color:#a8a8a8">路径查找器</div>
<svg class="a" style="left:985px;top:250px" width="12" height="8"><path d="M0,3 L3,3 L1.5,5 Z" fill="#ddd"/><rect x="4" y="0.5" width="7" height="7" fill="#888"/><path d="M4,2.5 L11,2.5 M4,4.5 L11,4.5" stroke="#555"/></svg>
<div class="a" style="left:812px;top:260.5px;width:188px;height:135.5px;background:#505050"></div>
<div class="a" style="left:816px;top:265px;width:171px;height:131px;background:#585858"></div>
<div class="a" style="left:816px;top:265px;width:171px;height:2px;background:#3e3e3e"></div>
<div class="a" style="left:816px;top:282.6px;width:171px;height:1px;background:#454545"></div>
<div class="a" style="left:816px;top:299.0px;width:171px;height:1px;background:#454545"></div>
<div class="a" style="left:816px;top:315.4px;width:171px;height:1px;background:#454545"></div>
<div class="a" style="left:816px;top:331.8px;width:171px;height:1px;background:#454545"></div>
<div class="a" style="left:816px;top:348.2px;width:171px;height:1px;background:#454545"></div>
<div class="a" style="left:816px;top:364.6px;width:171px;height:1px;background:#454545"></div>
<div class="a" style="left:816px;top:381.0px;width:171px;height:1px;background:#454545"></div>
<div class="a" style="left:816px;top:397.4px;width:171px;height:1px;background:#454545"></div>
<div class="a" style="left:834px;top:265px;width:1px;height:131px;background:#464646"></div>
<div class="a" style="left:958px;top:265px;width:1px;height:131px;background:#464646"></div>
<div class="a" style="left:850.5px;top:267px;width:3.2px;height:129px;background:#4f7fd6"></div>
<svg class="a" style="left:819px;top:270.4px" width="14" height="9"><path d="M1,4.5 C4,0.5 10,0.5 13,4.5 C10,8 4,8 1,4.5 Z" fill="#c4c4c4"/><circle cx="7" cy="4.3" r="2.2" fill="#2e2e2e"/></svg>
<svg class="a" style="left:960.5px;top:268.9px" width="12" height="12"><circle cx="6" cy="6" r="4.2" fill="#3a3a3a" stroke="#a0a0a0" stroke-width="1.2"/><circle cx="6" cy="6" r="1.6" fill="#8a8a8a"/></svg>
<div class="a" style="left:903.5px;top:267.2px;width:13px;height:15.4px;background:#fafafa"></div>
<svg class="a" style="left:819px;top:286.8px" width="14" height="9"><path d="M1,4.5 C4,0.5 10,0.5 13,4.5 C10,8 4,8 1,4.5 Z" fill="#c4c4c4"/><circle cx="7" cy="4.3" r="2.2" fill="#2e2e2e"/></svg>
<svg class="a" style="left:960.5px;top:285.3px" width="12" height="12"><circle cx="6" cy="6" r="4.2" fill="#3a3a3a" stroke="#a0a0a0" stroke-width="1.2"/><circle cx="6" cy="6" r="1.6" fill="#8a8a8a"/></svg>
<div class="a" style="left:903.5px;top:283.6px;width:13px;height:15.4px;background:#fafafa"></div>
<svg class="a" style="left:819px;top:303.2px" width="14" height="9"><path d="M1,4.5 C4,0.5 10,0.5 13,4.5 C10,8 4,8 1,4.5 Z" fill="#c4c4c4"/><circle cx="7" cy="4.3" r="2.2" fill="#2e2e2e"/></svg>
<svg class="a" style="left:960.5px;top:301.7px" width="12" height="12"><circle cx="6" cy="6" r="5.5" fill="#8a8a8a" stroke="#a0a0a0" stroke-width="1.2"/><circle cx="6" cy="6" r="1.6" fill="#444"/></svg>
<div class="a" style="left:974.5px;top:304.2px;width:7px;height:7px;background:#5b86e8;border:1px solid #222"></div>
<div class="a" style="left:903.5px;top:300.0px;width:13px;height:15.4px;background:#fafafa"></div>
<svg class="a" style="left:960.5px;top:318.1px" width="12" height="12"><circle cx="6" cy="6" r="4.2" fill="#3a3a3a" stroke="#a0a0a0" stroke-width="1.2"/><circle cx="6" cy="6" r="1.6" fill="#8a8a8a"/></svg>
<div class="a" style="left:903.5px;top:316.4px;width:13px;height:15.4px;background:#fafafa"></div>
<svg class="a" style="left:960.5px;top:334.5px" width="12" height="12"><circle cx="6" cy="6" r="4.2" fill="#3a3a3a" stroke="#a0a0a0" stroke-width="1.2"/><circle cx="6" cy="6" r="1.6" fill="#8a8a8a"/></svg>
<div class="a" style="left:903.5px;top:332.8px;width:13px;height:15.4px;background:#fafafa"></div>
<svg class="a" style="left:960.5px;top:350.9px" width="12" height="12"><circle cx="6" cy="6" r="4.2" fill="#3a3a3a" stroke="#a0a0a0" stroke-width="1.2"/><circle cx="6" cy="6" r="1.6" fill="#8a8a8a"/></svg>
<div class="a" style="left:903.5px;top:349.2px;width:13px;height:15.4px;background:#fafafa"></div>
<svg class="a" style="left:819px;top:368.8px" width="14" height="9"><path d="M1,4.5 C4,0.5 10,0.5 13,4.5 C10,8 4,8 1,4.5 Z" fill="#c4c4c4"/><circle cx="7" cy="4.3" r="2.2" fill="#2e2e2e"/></svg>
<svg class="a" style="left:960.5px;top:367.3px" width="12" height="12"><circle cx="6" cy="6" r="4.2" fill="#3a3a3a" stroke="#a0a0a0" stroke-width="1.2"/><circle cx="6" cy="6" r="1.6" fill="#8a8a8a"/></svg>
<div class="a" style="left:903.5px;top:365.6px;width:13px;height:15.4px;background:#fafafa"></div>
<svg class="a" style="left:960.5px;top:383.7px" width="12" height="12"><circle cx="6" cy="6" r="4.2" fill="#3a3a3a" stroke="#a0a0a0" stroke-width="1.2"/><circle cx="6" cy="6" r="1.6" fill="#8a8a8a"/></svg>
<div class="a" style="left:903.5px;top:382.0px;width:13px;height:15.4px;background:#fafafa"></div>
<svg class="a" style="left:903.5px;top:267.2px" width="13" height="15.4" viewBox="0 0 13 15" preserveAspectRatio="none"><rect x="0" y="0" width="13" height="2" fill="#333"/><rect x="5.5" y="2" width="2.2" height="13" fill="#3a3a3a"/></svg>
<svg class="a" style="left:903.5px;top:283.6px" width="13" height="15.4" viewBox="0 0 13 15" preserveAspectRatio="none"><rect x="0" y="7" width="13" height="1.6" fill="#444"/><rect x="0" y="0" width="13" height="1.5" fill="#666"/></svg>
<svg class="a" style="left:903.5px;top:300.0px" width="13" height="15.4" viewBox="0 0 13 15" preserveAspectRatio="none"><circle cx="6.5" cy="7.5" r="5" fill="#fff" stroke="#8a1a10" stroke-width="1.8"/></svg>
<svg class="a" style="left:903.5px;top:316.4px" width="13" height="15.4" viewBox="0 0 13 15" preserveAspectRatio="none"><path d="M0,3 L11,1 L11,3 L0,4 Z" fill="#555"/><path d="M1,14 L5,5 L8,5 L6,14 Z" fill="#777"/></svg>
<svg class="a" style="left:903.5px;top:332.8px" width="13" height="15.4" viewBox="0 0 13 15" preserveAspectRatio="none"><path d="M0,7 L13,5 L13,8 L0,8 Z" fill="#555"/><path d="M1,14 L4,8 L13,8 L13,14 Z" fill="#8a8a8a"/></svg>
<svg class="a" style="left:903.5px;top:349.2px" width="13" height="15.4" viewBox="0 0 13 15" preserveAspectRatio="none"><rect x="4" y="0" width="2" height="15" fill="#333"/><rect x="8" y="0" width="3" height="15" fill="#9a9a9a"/></svg>
<svg class="a" style="left:903.5px;top:365.6px" width="13" height="15.4" viewBox="0 0 13 15" preserveAspectRatio="none"><circle cx="6.5" cy="7.5" r="6.2" fill="#e0180c"/></svg>
<svg class="a" style="left:903.5px;top:382.0px" width="13" height="15.4" viewBox="0 0 13 15" preserveAspectRatio="none"><path d="M6,1 C12,3 12,11 8,15 L5,15 C8,10 8,5 6,1 Z" fill="#8a8a8a"/></svg>
<div class="a" style="left:987px;top:265px;width:9px;height:131px;background:#3a3a3a"></div>
<svg class="a" style="left:988px;top:269px" width="8" height="6"><path d="M0.5,5.5 L4,1 L7.5,5.5 Z" fill="#e8e8e8"/></svg>
<div class="a" style="left:988px;top:341px;width:8px;height:55px;background:#9a9a9a"></div>
</body></html>
